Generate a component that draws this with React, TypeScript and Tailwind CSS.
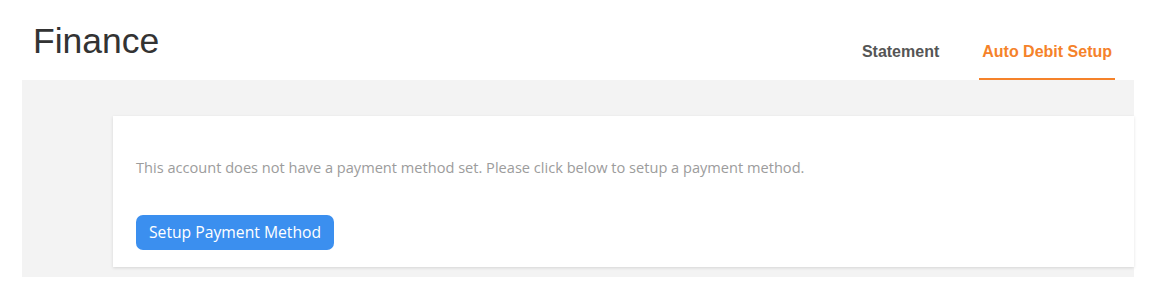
export default function App() {
  return (
    <div className="w-[1168px] h-[294px] bg-white pl-[22px] pr-[34px] pt-0">
      {/* Header */}
      <div className="flex items-end justify-between h-[80px]">
        <h1 className="self-start mt-[20px] ml-[11px] text-[35.5px] leading-[42px] text-[#333] font-['Liberation_Sans',Arial,sans-serif]">
          Finance
        </h1>
        <div className="flex items-end gap-[40px] mr-[19px] font-['Liberation_Sans',Arial,sans-serif] text-[16px] font-bold">
          <button className="pb-[18px] leading-[20px] text-[#555]">Statement</button>
          <button className="px-[3px] pb-[16px] leading-[20px] text-[#f5822a] border-b-2 border-[#f5822a]">
            Auto Debit Setup
          </button>
        </div>
      </div>

      {/* Content */}
      <div className="bg-[#f3f3f3] pl-[91px] pt-[36px] pb-[10px]">
        <div className="bg-white h-[151px] pl-[23px] pt-[41px] shadow-[0_1px_3px_rgba(0,0,0,0.12)] font-['Open_Sans',sans-serif]">
          <p className="text-[14.6px] leading-[20px] text-[#9c9c9c]">
            This account does not have a payment method set. Please click below to setup a payment method.
          </p>
          <button className="mt-[38px] h-[35px] px-[13px] rounded-[7px] bg-[#3b8fef] text-white text-[15.7px]">
            Setup Payment Method
          </button>
        </div>
      </div>
    </div>
  );
}
